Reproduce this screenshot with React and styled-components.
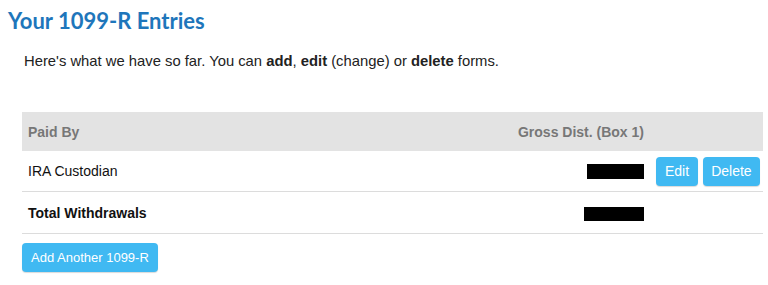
import React from "react";
import styled, { createGlobalStyle } from "styled-components";

const GlobalStyle = createGlobalStyle`
    body {
        margin: 0;
        background: #fff;
        font-family: "Liberation Sans", Arial, sans-serif;
        color: #222;
    }
`;

const Page = styled.div`
    width: 768px;
    height: 285px;
    overflow: hidden;
`;

const Title = styled.h1`
    margin: 0;
    padding: 8px 0 0 8px;
    font-family: Lato, "Open Sans", sans-serif;
    font-weight: 700;
    font-size: 22px;
    line-height: 26px;
    color: #1e76bb;
`;

const Intro = styled.p`
    margin: 18px 0 0 24px;
    font-size: 14.8px;
    line-height: 18px;
    color: #222;
`;

const Table = styled.div`
    margin: 42px 5px 0 22px;
`;

const Row = styled.div`
    display: grid;
    grid-template-columns: 1fr 200px 117px;
    align-items: center;
    height: ${(p) => p.$height}px;
    background: ${(p) => (p.$head ? "#e3e3e3" : "#fff")};
    border-bottom: ${(p) => (p.$head ? "none" : "1px solid #dcdcdc")};
`;

const Cell = styled.div`
    padding: ${(p) => (p.$right ? "0 2px 0 0" : "0 0 0 6px")};
    text-align: ${(p) => (p.$right ? "right" : "left")};
    font-size: 14px;
    font-weight: ${(p) => (p.$bold ? 700 : 400)};
    color: ${(p) => (p.$muted ? "#777" : "#111")};
`;

const Redacted = styled.span`
    display: inline-block;
    vertical-align: middle;
    width: ${(p) => p.$w}px;
    height: ${(p) => p.$h}px;
    background: #000;
`;

const Actions = styled.div`
    display: flex;
    gap: 5px;
    padding-left: 10px;
`;

const Button = styled.button`
    height: ${(p) => p.$height || 29}px;
    padding: 0 ${(p) => p.$pad || 8}px;
    border: none;
    border-radius: 4px;
    background: #40b9f2;
    color: #fff;
    font-family: "Liberation Sans", Arial, sans-serif;
    font-size: ${(p) => p.$size || 14}px;
    cursor: pointer;
    box-shadow: 0 1px 1px rgba(0, 0, 0, 0.15);
`;

const Footer = styled.div`
    padding: 9px 0 0 22px;
`;

export default function App() {
    return (
        <Page>
            <GlobalStyle />
            <Title>Your 1099-R Entries</Title>
            <Intro>
                Here's what we have so far. You can <b>add</b>, <b>edit</b> (change) or{" "}
                <b>delete</b> forms.
            </Intro>
            <Table>
                <Row $head $height={39}>
                    <Cell $bold $muted>Paid By</Cell>
                    <Cell $bold $muted $right>Gross Dist. (Box 1)</Cell>
                    <div />
                </Row>
                <Row $height={40}>
                    <Cell>IRA Custodian</Cell>
                    <Cell $right>
                        <Redacted $w={57} $h={15} />
                    </Cell>
                    <Actions>
                        <Button $pad={9}>Edit</Button>
                        <Button $pad={8}>Delete</Button>
                    </Actions>
                </Row>
                <Row $height={41}>
                    <Cell $bold>Total Withdrawals</Cell>
                    <Cell $right>
                        <Redacted $w={60} $h={14} />
                    </Cell>
                    <div />
                </Row>
            </Table>
            <Footer>
                <Button $pad={9} $size={13}>Add Another 1099-R</Button>
            </Footer>
        </Page>
    );
}
